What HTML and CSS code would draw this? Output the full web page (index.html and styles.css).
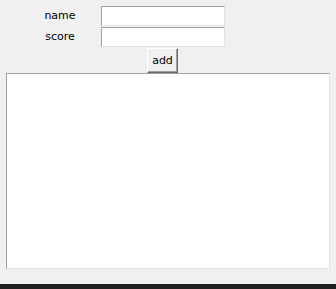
FILE: index.html
```html
<!DOCTYPE html>
<html>
<head>
<meta charset="utf-8">
<link rel="stylesheet" href="styles.css">
</head>
<body>
<div class="window">
  <div class="form">
    <div class="row">
      <span class="label">name</span>
      <div class="entry"></div>
    </div>
    <div class="row">
      <span class="label">score</span>
      <div class="entry"></div>
    </div>
    <div class="btnrow">
      <button class="btn">add</button>
    </div>
  </div>
  <div class="listbox"></div>
  <div class="spacer"></div>
  <div class="taskbar"></div>
</div>
</body>
</html>
```
FILE: styles.css
```css
html, body {
  margin: 0;
  padding: 0;
  background: #f0f0f0;
}
.window {
  width: 336px;
  height: 289px;
  display: flex;
  flex-direction: column;
  font-family: "DejaVu Sans", "Liberation Sans", sans-serif;
  font-size: 11px;
  color: #000;
}
.form {
  display: flex;
  flex-direction: column;
  padding-top: 5px;
}
.row {
  display: flex;
  align-items: center;
  height: 21px;
}
.label {
  width: 80px;
  margin-left: 20px;
  text-align: center;
  margin-right: 1px;
}
.entry {
  width: 122px;
  height: 18px;
  background: #fff;
  border-top: 1px solid #a0a0a0;
  border-left: 1px solid #a0a0a0;
  border-right: 1px solid #e3e3e3;
  border-bottom: 1px solid #e3e3e3;
}
.btnrow {
  display: flex;
  padding-left: 147px;
  padding-top: 1px;
}
.btn {
  width: 31px;
  height: 25px;
  margin: 0;
  padding: 0;
  background: #f0f0f0;
  font-family: "DejaVu Sans", "Liberation Sans", sans-serif;
  font-size: 11px;
  color: #000;
  border-top: 1px solid #fff;
  border-left: 1px solid #fff;
  border-right: 1px solid #696969;
  border-bottom: 1px solid #696969;
  box-shadow: inset -1px -1px 0 #a0a0a0;
}
.listbox {
  margin-left: 6px;
  width: 322px;
  height: 194px;
  background: #fff;
  border-top: 1px solid #a0a0a0;
  border-left: 1px solid #a0a0a0;
  border-right: 1px solid #e3e3e3;
  border-bottom: 1px solid #e3e3e3;
}
.spacer {
  flex: 1;
}
.taskbar {
  height: 5px;
  background: #1f1f1f;
}
```
